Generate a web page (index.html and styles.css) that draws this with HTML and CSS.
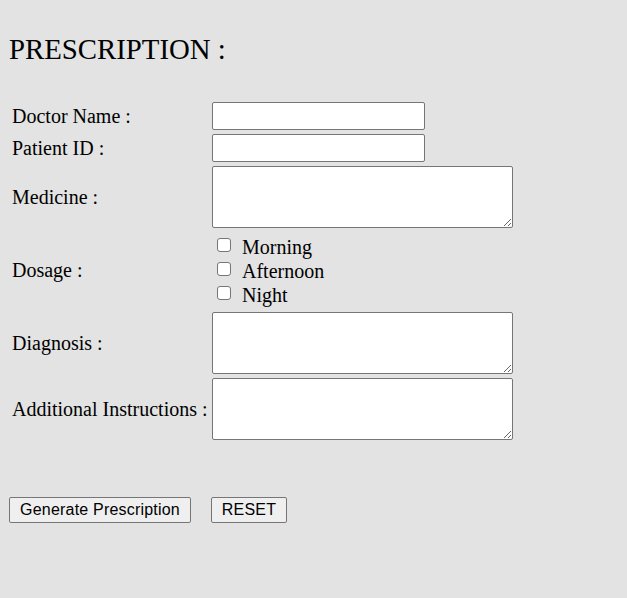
FILE: index.html
```html
<!DOCTYPE html>
<html>
<head>
<meta charset="utf-8">
<title>Prescription</title>
<link rel="stylesheet" href="styles.css">
</head>
<body>
<h1 class="title">PRESCRIPTION :</h1>
<form class="form">
  <table class="grid">
    <tr>
      <td class="label">Doctor Name :</td>
      <td><input type="text" class="field"></td>
    </tr>
    <tr>
      <td class="label">Patient ID :</td>
      <td><input type="text" class="field"></td>
    </tr>
    <tr>
      <td class="label">Medicine :</td>
      <td><textarea class="area"></textarea></td>
    </tr>
    <tr>
      <td class="label">Dosage :</td>
      <td class="options">
        <div class="option"><input type="checkbox" class="check"><span>Morning</span></div>
        <div class="option"><input type="checkbox" class="check"><span>Afternoon</span></div>
        <div class="option"><input type="checkbox" class="check"><span>Night</span></div>
      </td>
    </tr>
    <tr>
      <td class="label">Diagnosis :</td>
      <td><textarea class="area"></textarea></td>
    </tr>
    <tr>
      <td class="label">Additional Instructions :</td>
      <td><textarea class="area"></textarea></td>
    </tr>
  </table>
  <div class="actions">
    <button type="button" class="btn btn-generate">Generate Prescription</button>
    <button type="reset" class="btn btn-reset">RESET</button>
  </div>
</form>
</body>
</html>
```
FILE: styles.css
```css
html, body {
  background: #e2e3e2;
}
body {
  margin: 0;
  padding: 8px;
  font-family: "Liberation Serif", "Times New Roman", serif;
  color: #000;
}
.title {
  font-size: 28.8px;
  font-weight: normal;
  margin: 25px 0 33px 0;
  padding-left: 1px;
  line-height: normal;
}
.form {
  margin: 0;
}
.grid {
  border-collapse: separate;
  border-spacing: 2px;
  font-size: 20px;
}
.grid td {
  padding: 1px;
  vertical-align: middle;
}
.grid td.label {
  width: 196px;
  padding-left: 2px;
  white-space: nowrap;
}
.field {
  display: block;
  box-sizing: border-box;
  width: 213px;
  height: 28px;
  margin: 0;
  border: 1px solid #767676;
  border-radius: 2px;
  background: #fff;
}
.area {
  display: block;
  box-sizing: border-box;
  width: 301px;
  height: 62px;
  margin: 0;
  border: 1px solid #767676;
  border-radius: 2px;
  background: #fff;
}
.grid td.options {
  padding-top: 4px;
  padding-bottom: 2px;
}
.option {
  line-height: 24px;
  white-space: nowrap;
}
.check {
  -webkit-appearance: none;
  appearance: none;
  box-sizing: border-box;
  width: 14px;
  height: 14px;
  margin: 3px 11px 2px 5px;
  border: 1px solid #767676;
  border-radius: 3px;
  background: #fff;
  vertical-align: baseline;
}
.actions {
  display: flex;
  gap: 20px;
  margin-top: 54px;
  padding-left: 1px;
}
.btn {
  box-sizing: border-box;
  height: 26px;
  padding: 0;
  font-family: "Liberation Sans", Arial, sans-serif;
  font-size: 16px;
  letter-spacing: 0.2px;
  color: #000;
  background: #efefef;
  border: 1px solid #767676;
  border-radius: 2px;
  text-align: center;
}
.btn-generate {
  width: 182px;
}
.btn-reset {
  width: 76px;
}
```
